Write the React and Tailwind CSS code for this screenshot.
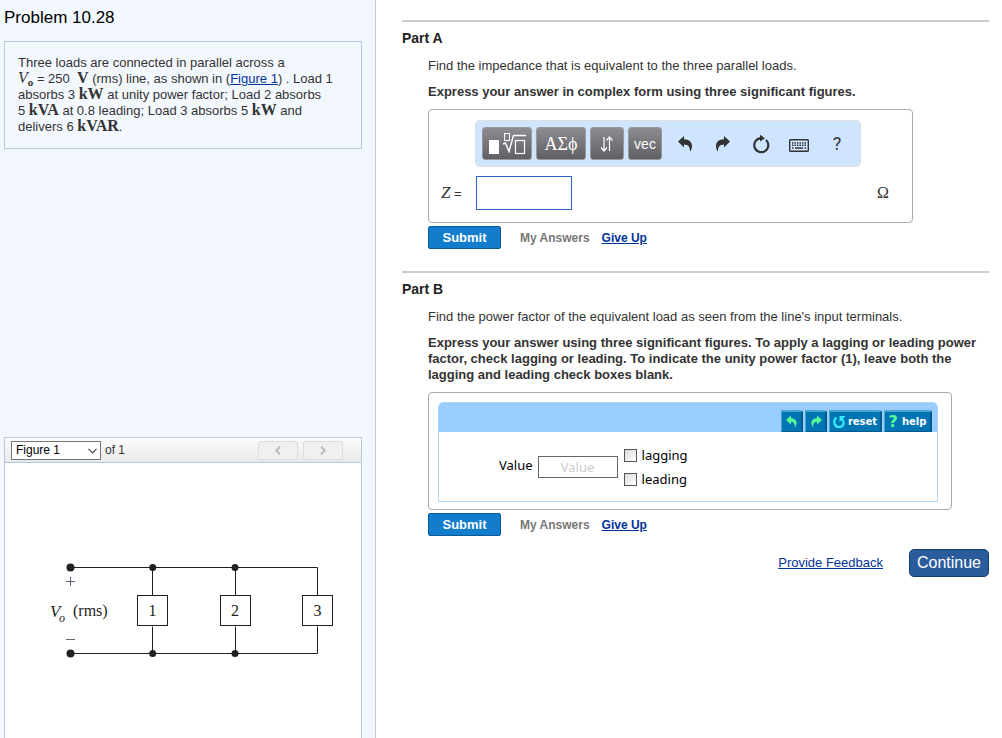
import { useState } from 'react';

const Unit = ({ children }) => (
  <span className="font-['Liberation_Serif',serif] text-base leading-[0] font-bold">{children}</span>
);

const Circuit = () => (
  <svg
    viewBox="0 0 320 120"
    className="w-[320px] h-[120px]"
    fill="none"
    stroke="#231f20"
    fontFamily="'Liberation Serif', serif"
    role="img"
    aria-label="Three loads in parallel"
  >
    <path d="M40.5 17.5H287.5V45.5M40.5 103.5H287.5V76.5M122.5 17.5V45.5M122.5 76.5V103.5M205.5 17.5V45.5M205.5 76.5V103.5" />
    <rect x="107.5" y="45.5" width="30" height="30" />
    <rect x="190.5" y="45.5" width="30" height="30" />
    <rect x="272.5" y="45.5" width="30" height="30" />
    <path d="M36 31.5H45M40.5 27V36M36 89.5H45" strokeWidth="0.8" stroke="#3d3a50" />
    <g fill="#231f20" stroke="none">
      <circle cx="40.5" cy="17.5" r="4" />
      <circle cx="40.5" cy="103.5" r="4" />
      <circle cx="122.7" cy="17.5" r="3.5" />
      <circle cx="205" cy="17.5" r="3.5" />
      <circle cx="122.7" cy="103.5" r="3.5" />
      <circle cx="205" cy="103.5" r="3.5" />
      <text x="20" y="67" fontSize="17" fontStyle="italic">V</text>
      <text x="29" y="72" fontSize="12" fontStyle="italic">o</text>
      <text x="43" y="66" fontSize="16">(rms)</text>
      <g fontSize="16" textAnchor="middle">
        <text x="122.5" y="66">1</text>
        <text x="205" y="66">2</text>
        <text x="287.5" y="66">3</text>
      </g>
    </g>
  </svg>
);

const TemplateIcon = () => (
  <svg width="40" height="26" viewBox="0 0 40 26" fill="none" stroke="#fff">
    <rect x="2" y="9" width="10" height="14" fill="#fff" stroke="none" />
    <rect x="17.5" y="2.5" width="5" height="7" strokeWidth="1" />
    <path d="M16 13L18.5 12L22 20.5L26.5 4.5H39" strokeWidth="1.4" />
    <rect x="28.5" y="9.5" width="9" height="13" strokeWidth="1.2" />
  </svg>
);

const ArrowsIcon = () => (
  <svg width="16" height="18" viewBox="0 0 16 18" fill="none" stroke="#fff">
    <path d="M5 2V16M2 12.5L5 16L8 12.5M10.5 16V2M7.5 5.5L10.5 2L13.5 5.5" strokeWidth="1.2" />
  </svg>
);

const CurvedArrow = ({ flip }) => (
  <svg width="16" height="16" viewBox="0 0 16 16" fill="#333" className={flip ? '-scale-x-100' : ''}>
    <path d="M1 5.5L7 0V3.3C12.5 3.5 15.2 6.3 15 10.5C14.9 12.5 14.2 14.2 13 15.5C13 10.8 11.5 8.6 7 8.5V11.5Z" />
  </svg>
);

const ReloadIcon = () => (
  <svg width="18" height="20" viewBox="0 0 18 20" fill="none">
    <path d="M9 4.2A7 7 0 1 0 14 6" stroke="#333" strokeWidth="2.2" />
    <path d="M8 0.8L13 4.2L8 7.6Z" fill="#333" />
  </svg>
);

const KeyboardIcon = () => (
  <svg width="20" height="13" viewBox="0 0 20 13" fill="none" stroke="#333">
    <rect x="0.7" y="0.7" width="18.6" height="11.6" rx="0.8" strokeWidth="1.4" />
    <path d="M3 4H17M3 6.3H17" strokeWidth="1.5" strokeDasharray="1.5 1" />
    <path d="M3 9H4.5M6 9H14M15.5 9H17" strokeWidth="1.5" />
  </svg>
);

const SmallArrow = ({ flip }) => (
  <svg width="14" height="14" viewBox="0 0 14 14" className={flip ? '-scale-x-100' : ''}>
    <path d="M1 5L6 0.5V3.3C10.5 3.3 14 7 9.5 13C10.3 9 9.2 6.8 6 6.7V9.5Z" fill="#5f9" />
  </svg>
);

const ResetIcon = () => (
  <svg width="13" height="14" viewBox="0 0 13 14" fill="none">
    <path d="M3.2 2.5C-0.5 6 1.5 12 6 12C10.5 12 12 7.5 9 4" stroke="#3ef" strokeWidth="2.2" />
    <path d="M6.5 1H12.5L6.5 7Z" fill="#3ef" />
  </svg>
);

const darkButton =
  'h-[33px] rounded-[3px] border border-[#999] bg-linear-to-b from-[#8c8c92] to-[#606064] text-white flex items-center justify-center';
const tileButton =
  "h-[22px] bg-[#0075b4] border-t-2 border-l border-r-2 border-b border-t-[#4aa5d2] border-l-[#4aa5d2] border-r-[#035a8c] border-b-[#035a8c] rounded-tr-[3px] text-white text-[10px] font-bold font-['DejaVu_Sans',sans-serif] flex items-center justify-center";

const SubmitRow = () => (
  <div className="mt-[3px] flex items-center text-xs font-bold">
    <button className="w-[73px] h-[23px] bg-[#117dcc] border border-[#0d5a94] rounded-[2px] text-white text-[13px] leading-4">
      Submit
    </button>
    <span className="ml-[19px] text-[#777]">My Answers</span>
    <a href="#give-up" className="ml-3 text-[#039] underline">Give Up</a>
  </div>
);

const Part = ({ title, intro, instructions, children }) => (
  <section className="border-t-2 border-[#ccc] pt-2 text-[13px] leading-4">
    <h2 className="text-sm leading-4 font-bold text-[#222]">{title}</h2>
    <div className="pl-[26px] mt-3">
      <p>{intro}</p>
      <p className="mt-[10px] font-bold">{instructions}</p>
      {children}
      <SubmitRow />
    </div>
  </section>
);

const Sidebar = () => (
  <aside className="w-[376px] shrink-0 min-h-screen flex flex-col bg-[#f3f8ff] border-r border-[#c0cbdc] pl-1 pr-[13px]">
    <div className="flex-1">
      <h1 className="pt-2 text-[17px] leading-5 text-black">Problem 10.28</h1>
      <div className="mt-[13px] border border-[#b7c9dd] px-[13px] pt-[13px] pb-[13px] text-[13px] leading-4">
        Three loads are connected in parallel across a<br />
        <span className="font-['Liberation_Serif',serif] text-base leading-[0] italic">V</span>
        <sub className="font-['Liberation_Serif',serif] text-[11px] leading-[0] font-bold">o</sub> = 250 &nbsp;
        <Unit>V</Unit> (rms) line, as shown in (<a href="#figure" className="text-[#039] underline">Figure 1</a>) . Load 1<br />
        absorbs 3 <Unit>kW</Unit> at unity power factor; Load 2 absorbs<br />
        5 <Unit>kVA</Unit> at 0.8 leading; Load 3 absorbs 5 <Unit>kW</Unit> and<br />
        delivers 6 <Unit>kVAR</Unit>.
      </div>
    </div>
    <div id="figure" className="border-x border-t border-[#b7c9dd] bg-white">
      <div className="h-[25px] flex items-center pl-[6px] pr-[18px] border-b border-[#b7c9dd] bg-linear-to-b from-[#fcfcfc] to-[#e8e8e8] text-xs">
        <div className="relative">
          <select
            aria-label="Figure"
            className="appearance-none block w-[90px] h-[19px] pl-1 border border-[#777] bg-white text-black"
          >
            <option>Figure 1</option>
          </select>
          <svg className="absolute right-1 top-[7px] pointer-events-none" width="9" height="6" viewBox="0 0 9 6" fill="none" stroke="#444">
            <path d="M0.5 0.8L4.5 4.8L8.5 0.8" strokeWidth="1.2" />
          </svg>
        </div>
        <span className="ml-1 flex-1">of 1</span>
        <button aria-label="Previous figure" className="w-10 h-[19px] mr-[5px] border border-[#ddd] bg-[#f0f0f0] rounded-[2px] flex items-center justify-center">
          <svg width="8" height="9" viewBox="0 0 8 9" fill="none" stroke="#bbb" strokeWidth="2"><path d="M6 0.8L2.3 4.5L6 8.2" /></svg>
        </button>
        <button aria-label="Next figure" className="w-10 h-[19px] border border-[#ddd] bg-[#f0f0f0] rounded-[2px] flex items-center justify-center">
          <svg width="8" height="9" viewBox="0 0 8 9" fill="none" stroke="#bbb" strokeWidth="2"><path d="M2 0.8L5.7 4.5L2 8.2" /></svg>
        </button>
      </div>
      <div className="pt-[87px] pb-[68px] pl-[25px]">
        <Circuit />
      </div>
    </div>
  </aside>
);

const ImpedanceAnswer = () => {
  const [value, setValue] = useState('');

  return (
    <div className="mt-[9px] max-w-[485px] h-[114px] border border-[#aaa] rounded-[4px] pt-[10px] pl-3 pr-[23px]">
      <div className="ml-[34px] max-w-[386px] h-[47px] border border-[#ddd] rounded-[5px] bg-[#cfe5ff] pl-[6px] flex items-center gap-1">
        <button aria-label="Templates" className={`${darkButton} w-[50px]`}><TemplateIcon /></button>
        <button className={`${darkButton} w-[50px] font-['Liberation_Serif',serif] text-lg`}>ΑΣϕ</button>
        <button aria-label="Subscript and superscript" className={`${darkButton} w-[34px]`}><ArrowsIcon /></button>
        <button className={`${darkButton} w-[34px] text-sm`}>vec</button>
        <div className="flex items-center">
          <button aria-label="Undo" className="w-[38px] flex justify-center"><CurvedArrow /></button>
          <button aria-label="Redo" className="w-[38px] flex justify-center"><CurvedArrow flip /></button>
          <button aria-label="Reset" className="w-[38px] flex justify-center"><ReloadIcon /></button>
          <button aria-label="Keyboard shortcuts" className="w-[38px] flex justify-center pt-1"><KeyboardIcon /></button>
          <button className="w-[38px] font-[Roboto,sans-serif] text-lg leading-5 text-[#333]">?</button>
        </div>
      </div>
      <div className="mt-[9px] flex items-center">
        <label htmlFor="impedance" className="w-[35px] whitespace-nowrap">
          <span className="font-['Liberation_Serif',serif] text-[17px] leading-4 italic">Z</span> =
        </label>
        <input
          id="impedance"
          value={value}
          onChange={(e) => setValue(e.target.value)}
          className="w-24 h-[34px] border border-[#2e65c8] px-1 outline-none"
        />
        <span className="ml-auto font-['Liberation_Serif',serif] text-base leading-4">Ω</span>
      </div>
    </div>
  );
};

const PowerFactorAnswer = () => (
  <div className="mt-[9px] max-w-[524px] border border-[#aaa] rounded-[4px] pt-[9px] pb-[7px] pl-[9px] pr-[13px]">
    <div className="h-[100px] border border-[#b0d5f8] rounded-t-[5px] overflow-hidden">
      <div className="h-[29px] bg-[#9cf] flex items-end justify-end gap-[2px] pr-[5px]">
        <button aria-label="Undo" className={`${tileButton} w-[22px]`}><SmallArrow /></button>
        <button aria-label="Redo" className={`${tileButton} w-[22px]`}><SmallArrow flip /></button>
        <button className={`${tileButton} w-[53px] gap-[2px]`}><ResetIcon />reset</button>
        <button className={`${tileButton} w-12 gap-1`}>
          <span className="text-base leading-4 text-[#5f9]">?</span>help
        </button>
      </div>
      <div className="mt-[15px] pl-[60px] flex items-center font-['Noto_Sans',sans-serif] text-black">
        <label htmlFor="factor" className="pb-1">Value</label>
        <input
          id="factor"
          placeholder="Value"
          className="ml-[5px] w-20 h-[22px] border border-[#666] text-center placeholder:text-[#ccc]"
        />
        <div className="ml-[6px] flex flex-col gap-2">
          {['lagging', 'leading'].map((name) => (
            <label key={name} className="flex items-center gap-[5px]">
              <input
                type="checkbox"
                className="appearance-none size-[13px] border border-[#555] bg-linear-to-br from-[#ddd] to-white"
              />
              {name}
            </label>
          ))}
        </div>
      </div>
    </div>
  </div>
);

const App = () => (
  <div className="flex min-h-screen bg-white font-['Liberation_Sans',Arial,sans-serif] text-[#333]">
    <Sidebar />
    <main className="flex-1 min-w-0 pt-5 pl-[26px] pr-[13px]">
      <Part
        title="Part A"
        intro="Find the impedance that is equivalent to the three parallel loads."
        instructions="Express your answer in complex form using three significant figures."
      >
        <ImpedanceAnswer />
      </Part>
      <div className="mt-[22px]">
        <Part
          title="Part B"
          intro="Find the power factor of the equivalent load as seen from the line's input terminals."
          instructions="Express your answer using three significant figures. To apply a lagging or leading power factor, check lagging or leading. To indicate the unity power factor (1), leave both the lagging and leading check boxes blank."
        >
          <PowerFactorAnswer />
        </Part>
      </div>
      <div className="mt-[13px] flex items-center justify-end gap-[26px]">
        <a href="#feedback" className="text-[13px] text-[#039] underline">Provide Feedback</a>
        <button className="w-20 h-7 rounded-[5px] border border-[#143f75] bg-[#2a5c9c] text-white text-base">
          Continue
        </button>
      </div>
    </main>
  </div>
);

export default App;
